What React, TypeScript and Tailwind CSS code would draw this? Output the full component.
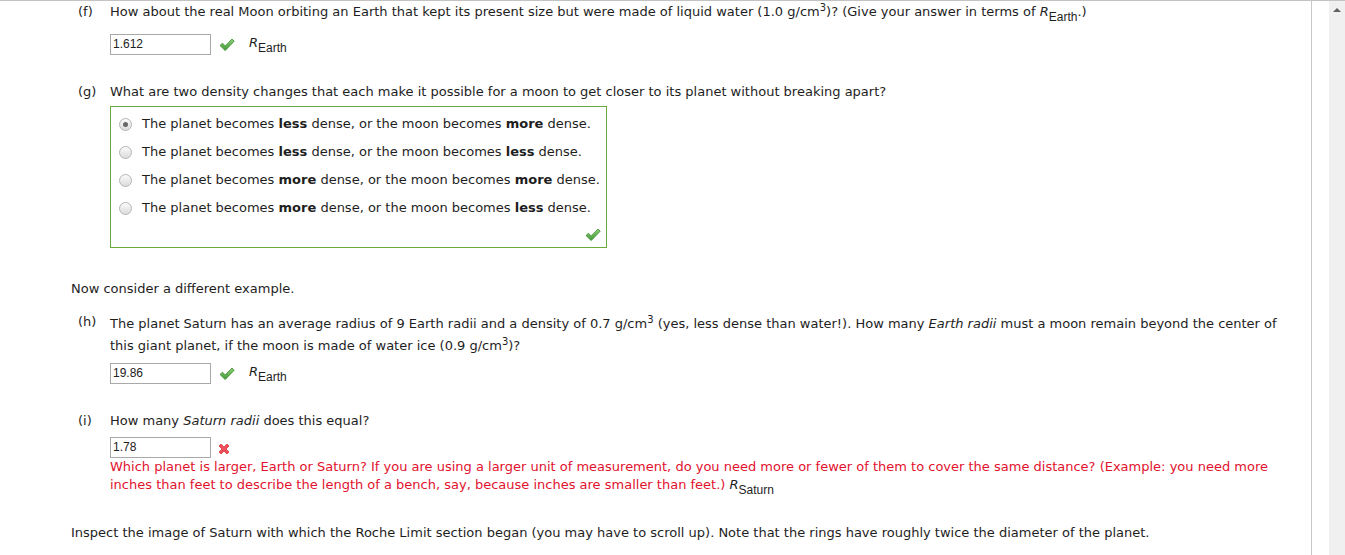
import React from "react";

const body = "font-['DejaVu_Sans',Verdana,sans-serif] text-[13px] text-[#1e1e1e]";

function Check({ className = "" }: { className?: string }) {
  return (
    <svg width="16" height="14" viewBox="0 0 16 14" className={className} aria-hidden="true">
      <defs>
        <linearGradient id="ck" x1="0" y1="0" x2="0" y2="1">
          <stop offset="0" stopColor="#8fd07a" />
          <stop offset="1" stopColor="#3f9a35" />
        </linearGradient>
      </defs>
      <path
        d="M1 7.5 L3.5 5.2 L6.2 8 L13 1 L15.2 3.2 L6.2 12.6 Z"
        fill="url(#ck)"
        stroke="#3b8a2e"
        strokeWidth="0.8"
        strokeLinejoin="round"
      />
    </svg>
  );
}

function Cross() {
  return (
    <svg width="14" height="14" viewBox="0 0 14 14" aria-hidden="true">
      <path
        d="M2 4 L4 2 L7 5 L10 2 L12 4 L9 7 L12 10 L10 12 L7 9 L4 12 L2 10 L5 7 Z"
        fill="#f0505a"
        stroke="#d9303a"
        strokeWidth="0.8"
        strokeLinejoin="round"
      />
    </svg>
  );
}

function R({ sub }: { sub: string }) {
  return (
    <span className="text-[#1e1e1e]">
      <i>R</i>
      <sub className="text-[12px] leading-none font-['Liberation_Sans',Arial,sans-serif] relative top-[5px]">{sub}</sub>
    </span>
  );
}

function Cm3() {
  return (
    <>
      g/cm<sup className="text-[10px] leading-none">3</sup>
    </>
  );
}

function Answer({ value, ok, unit = "Earth" }: { value: string; ok: boolean; unit?: string }) {
  return (
    <div className="flex items-center h-[22px]">
      <div className="w-[101px] h-[21px] border border-[#a9a9a9] bg-white px-[2px] leading-[19px] text-[12px] font-['Liberation_Sans',Arial,sans-serif] text-[#222]">
        {value}
      </div>
      {ok ? (
        <>
          <Check className="ml-[8px] mt-[2px]" />
          <span className="ml-[14px] -mt-[3px]">
            <R sub={unit} />
          </span>
        </>
      ) : (
        <span className="ml-[6px] mt-[4px]">
          <Cross />
        </span>
      )}
    </div>
  );
}

function Radio({ checked }: { checked?: boolean }) {
  return (
    <span className="w-[13px] h-[13px] rounded-full border border-[#b5b5b5] bg-gradient-to-b from-[#fafafa] to-[#dcdcdc] flex items-center justify-center shrink-0">
      {checked && <span className="w-[5px] h-[5px] rounded-full bg-[#666]" />}
    </span>
  );
}

function Part({ label, children }: { label: string; children: React.ReactNode }) {
  return (
    <div className="flex">
      <span className="w-[39px] pl-[7px] shrink-0">{label}</span>
      <div className="flex-1 min-w-0">{children}</div>
    </div>
  );
}

const options: [string, string][] = [
  ["less", "more"],
  ["less", "less"],
  ["more", "more"],
  ["more", "less"],
];

export default function App() {
  return (
    <div className={`${body} w-[1345px] h-[555px] overflow-hidden bg-white border-t border-[#c3c3c3] flex`}>
      <div className="w-[1312px] border-r border-[#c8c8c8] pl-[71px] pr-[10px] pt-[2px] leading-[18px]">
        <Part label="(f)">
          <p>
            How about the real Moon orbiting an Earth that kept its present size but were made of liquid water (1.0{" "}
            <Cm3 />
            )? (Give your answer in terms of <R sub="Earth" />
            .)
          </p>
          <div className="mt-[12px]">
            <Answer value="1.612" ok />
          </div>
        </Part>

        <div className="mt-[28px]">
          <Part label="(g)">
            <p>What are two density changes that each make it possible for a moon to get closer to its planet without breaking apart?</p>
            <div className="mt-[5px] w-[497px] border border-[#6aaa3c] pt-[3px]">
              {options.map(([a, b], i) => (
                <div key={i} className="h-[28px] flex items-center pl-[8px] gap-[10px]">
                  <Radio checked={i === 0} />
                  <span>
                    The planet becomes <b>{a}</b> dense, or the moon becomes <b>{b}</b> dense.
                  </span>
                </div>
              ))}
              <div className="h-[25px] flex justify-end items-center pr-[5px]">
                <Check />
              </div>
            </div>
          </Part>
        </div>

        <p className="mt-[32px]">Now consider a different example.</p>

        <div className="mt-[15px]">
          <Part label="(h)">
            <p className="leading-[22px]">
              The planet Saturn has an average radius of 9 Earth radii and a density of 0.7 <Cm3 /> (yes, less dense than
              water!). How many <i>Earth radii</i> must a moon remain beyond the center of this giant planet, if the moon is
              made of water ice (0.9 <Cm3 />
              )?
            </p>
            <div className="mt-[5px]">
              <Answer value="19.86" ok />
            </div>
          </Part>
        </div>

        <div className="mt-[28px]">
          <Part label="(i)">
            <p>
              How many <i>Saturn radii</i> does this equal?
            </p>
            <div className="mt-[6px]">
              <Answer value="1.78" ok={false} />
            </div>
            <p>
              <span className="text-[#e2122e]">
                Which planet is larger, Earth or Saturn? If you are using a larger unit of measurement, do you need more or
                fewer of them to cover the same distance? (Example: you need more inches than feet to describe the length of a
                bench, say, because inches are smaller than feet.)
              </span>{" "}
              <R sub="Saturn" />
            </p>
          </Part>
        </div>

        <p className="mt-[30px]">
          Inspect the image of Saturn with which the Roche Limit section began (you may have to scroll up). Note that the
          rings have roughly twice the diameter of the planet.
        </p>
      </div>
      <div className="w-[17px]" />
      <div className="w-[16px] bg-[#f0f0f0] flex justify-center pt-[7px]">
        <span className="w-0 h-0 border-l-[4px] border-r-[4px] border-b-[4px] border-l-transparent border-r-transparent border-b-[#606060]" />
      </div>
    </div>
  );
}
